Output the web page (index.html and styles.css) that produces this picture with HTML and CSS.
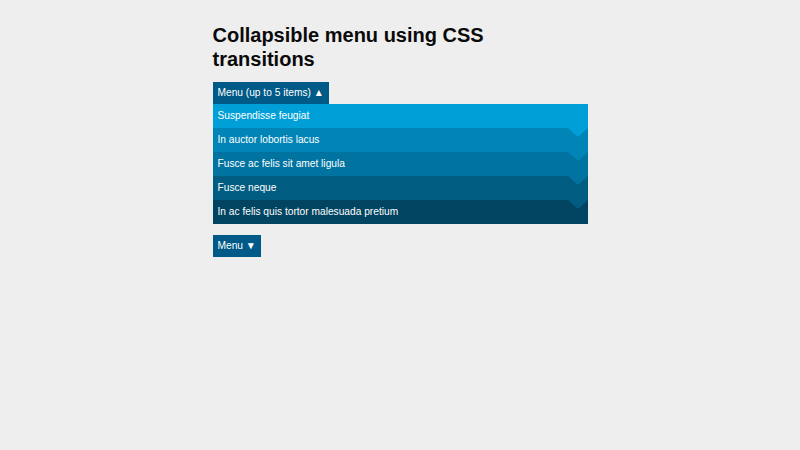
FILE: index.html
```html
<!DOCTYPE html>
<html>
<head>
<meta charset="utf-8">
<link rel="stylesheet" href="styles.css">
</head>
<body>
<div class="page">
  <h1 class="title">Collapsible menu using CSS transitions</h1>
  <div class="menu">
    <div class="menu-btn">Menu (up to 5 items) ▲</div>
    <ul class="menu-list">
      <li class="item item-1">Suspendisse feugiat</li>
      <li class="item item-2">In auctor lobortis lacus</li>
      <li class="item item-3">Fusce ac felis sit amet ligula</li>
      <li class="item item-4">Fusce neque</li>
      <li class="item item-5">In ac felis quis tortor malesuada pretium</li>
    </ul>
  </div>
  <div class="menu">
    <div class="menu-btn">Menu ▼</div>
  </div>
</div>
</body>
</html>
```
FILE: styles.css
```css
html, body {
  margin: 0;
  padding: 0;
  background: #eeeeee;
  font-family: "Liberation Sans", Arial, sans-serif;
}
.page {
  width: 375px;
  margin: 0 auto;
  padding-top: 23px;
}
.title {
  margin: 0 0 11px;
  font-size: 20px;
  line-height: 24px;
  font-weight: bold;
  color: #0a0a0a;
}
.menu {
  margin-bottom: 11px;
}
.menu-btn {
  display: inline-block;
  background: #005a87;
  color: #fff;
  font-size: 10.2px;
  line-height: 22px;
  padding: 0 5px;
}
.menu-list {
  list-style: none;
  margin: 0;
  padding: 0;
}
.item {
  position: relative;
  height: 24px;
  line-height: 24px;
  padding: 0 5px;
  font-size: 10.2px;
  color: #fff;
}
.item::before {
  content: "";
  position: absolute;
  right: 0;
  top: 0;
  border-left: 10px solid transparent;
  border-right: 10px solid transparent;
  border-top: 9px solid var(--prev);
}
.item-1 { background: #009fd7; }
.item-1::before { display: none; }
.item-2 { background: #0085b6; --prev: #009fd7; }
.item-3 { background: #0073a0; --prev: #0085b6; }
.item-4 { background: #005c80; --prev: #0073a0; }
.item-5 { background: #004461; --prev: #005c80; }
```
